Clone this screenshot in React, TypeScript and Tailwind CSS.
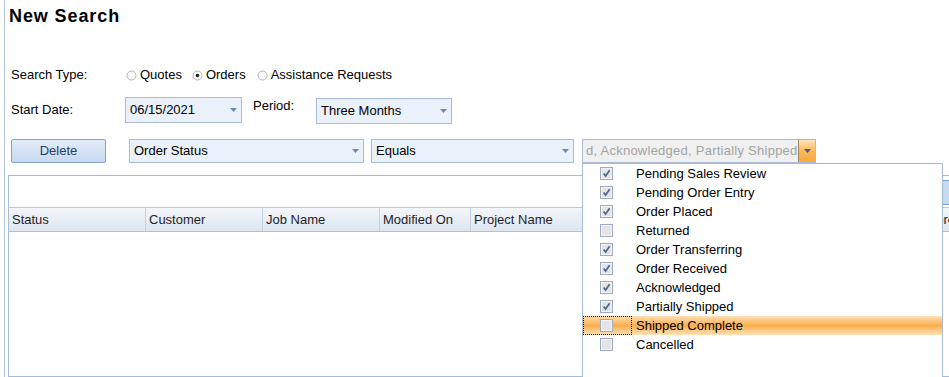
import React from "react";

const items = [
  { label: "Pending Sales Review", checked: true },
  { label: "Pending Order Entry", checked: true },
  { label: "Order Placed", checked: true },
  { label: "Returned", checked: false },
  { label: "Order Transferring", checked: true },
  { label: "Order Received", checked: true },
  { label: "Acknowledged", checked: true },
  { label: "Partially Shipped", checked: true },
  { label: "Shipped Complete", checked: false, active: true },
  { label: "Cancelled", checked: false },
];

// columns after "Project Name" sit under the open list; only the tail of "Store" shows
const columns = [
  { label: "Status", w: "w-[137px]" },
  { label: "Customer", w: "w-[117px]" },
  { label: "Job Name", w: "w-[117px]" },
  { label: "Modified On", w: "w-[91px]" },
  { label: "Project Name", w: "w-[120px]" },
  { label: "", w: "w-[120px]" },
  { label: "", w: "w-[110px]" },
  { label: "", w: "w-[100px]" },
  { label: "Store", w: "w-[80px]" },
];

function Arrow({ color = "#6e8bb4" }: { color?: string }) {
  return (
    <svg width="7" height="4" viewBox="0 0 7 4">
      <path d="M0 0 H7 L3.5 4 Z" fill={color} />
    </svg>
  );
}

function Combo({ text, className }: { text: string; className: string }) {
  return (
    <div
      className={`flex items-center border border-[#a9bdd6] bg-[#eaf1fb] ${className}`}
    >
      <span className="flex-1 pl-[4px] leading-[16px] text-black whitespace-nowrap overflow-hidden">
        {text}
      </span>
      <span className="w-[15px] flex justify-center">
        <Arrow />
      </span>
    </div>
  );
}

function Radio({ selected }: { selected?: boolean }) {
  return (
    <svg width="11" height="11" viewBox="0 0 11 11" className="shrink-0">
      <circle cx="5.5" cy="5.5" r="4.5" fill="#fbfbfb" stroke="#b4b4b4" />
      {selected && <circle cx="5.5" cy="5.5" r="1.8" fill="#222" />}
    </svg>
  );
}

function Check({ checked }: { checked: boolean }) {
  return (
    <svg width="13" height="13" viewBox="0 0 13 13" className="shrink-0">
      <rect x="0.5" y="0.5" width="12" height="12" fill="#f4f4f4" stroke="#9aabc3" />
      <rect x="2" y="2" width="9" height="9" fill="#e4e4e4" />
      {checked && (
        <path
          d="M3.6 6.4 L5.6 9 L9.6 3.2"
          fill="none"
          stroke="#4b678f"
          strokeWidth="1.7"
        />
      )}
    </svg>
  );
}

export default function App() {
  return (
    <div className="relative w-[949px] h-[377px] overflow-hidden bg-white pl-[4px] font-['Liberation_Sans',Arial,sans-serif] text-[13px] text-black">
      <div className="h-full border-l border-[#b4c4d8] flex flex-col">
        <div className="pl-[4px] pt-[7px] h-[25px] text-[18px] leading-[18px] font-bold tracking-[0.9px] text-black">
          New Search
        </div>

        {/* search type */}
        <div className="mt-[42px] h-[16px] pl-[6px] flex items-center leading-[16px]">
          <span className="w-[115px]">Search Type:</span>
          <div className="flex items-center gap-[3px]">
            <Radio />
            <span className="mr-[7px]">Quotes</span>
            <Radio selected />
            <span className="mr-[8px]">Orders</span>
            <Radio />
            <span>Assistance Requests</span>
          </div>
        </div>

        {/* dates */}
        <div className="mt-[14px] h-[26px] pl-[6px] flex items-start">
          <span className="w-[114px] self-center leading-[16px]">Start Date:</span>
          <Combo text="06/15/2021" className="w-[117px] h-[26px]" />
          <span className="ml-[11px] w-[63px] mt-[1px] leading-[16px]">Period:</span>
          <Combo text="Three Months" className="w-[136px] h-[26px] mt-[1px]" />
        </div>

        {/* filter row */}
        <div className="mt-[16px] h-[24px] pl-[6px] flex items-center">
          <button className="w-[95px] h-[24px] rounded-[2px] border border-[#86a3c9] bg-gradient-to-b from-[#e4edf9] to-[#c6d8f0] text-[#1f3d6b] leading-[16px]">
            Delete
          </button>
          <Combo text="Order Status" className="ml-[23px] w-[235px] h-[24px]" />
          <Combo text="Equals" className="ml-[7px] w-[203px] h-[24px]" />
          <div className="ml-[8px] w-[234px] h-[24px] flex border border-[#a9bdd6] bg-[#f0f0f0]">
            <span className="flex-1 pl-[3px] leading-[22px] tracking-[0.25px] text-[#a3a3a3] whitespace-nowrap overflow-hidden">
              d, Acknowledged, Partially Shipped
            </span>
            <span className="w-[17px] flex items-center justify-center border-l border-[#9a8660] bg-gradient-to-b from-[#fde3b9] via-[#fbb958] to-[#f8a63a]">
              <Arrow color="#3d5f91" />
            </span>
          </div>
        </div>

        {/* grid */}
        <div className="mt-[12px] ml-[3px] w-[960px] flex-1 border border-[#a9bcd5] flex flex-col">
          <div className="h-[32px] flex justify-end border-b border-[#b9c8da]">
            <div className="mt-[4px] w-[40px] h-[25px] border-y border-[#7aa0d0] bg-[#c8daf1]" />
          </div>
          <div className="h-[24px] flex border-b border-[#b0c1d6] bg-gradient-to-b from-[#f3f6fb] to-[#dee6f0]">
            {columns.map((c, i) => (
              <div
                key={i}
                className={`${c.w} shrink-0 border-r border-[#c3d0e0] pl-[3px] leading-[23px] text-[#1e1e1e] whitespace-nowrap overflow-hidden`}
              >
                {c.label}
              </div>
            ))}
          </div>
          <div className="flex-1 bg-white" />
        </div>
      </div>

      {/* open status list */}
      <div className="absolute left-[582px] top-[163px] w-[361px] h-[230px] border border-[#a9bcd5] bg-white">
        {items.map((it) => (
          <div
            key={it.label}
            className={`relative h-[19px] flex items-center ${
              it.active
                ? "bg-gradient-to-b from-[#fee0b3] via-[#fbae47] to-[#fde2b8]"
                : ""
            }`}
          >
            {it.active && (
              <span className="absolute left-0 top-0 w-[49px] h-[19px] border border-dotted border-black" />
            )}
            <span className="ml-[17px] flex">
              <Check checked={it.checked} />
            </span>
            <span className="ml-[23px] leading-[16px] whitespace-nowrap">{it.label}</span>
          </div>
        ))}
      </div>
    </div>
  );
}
